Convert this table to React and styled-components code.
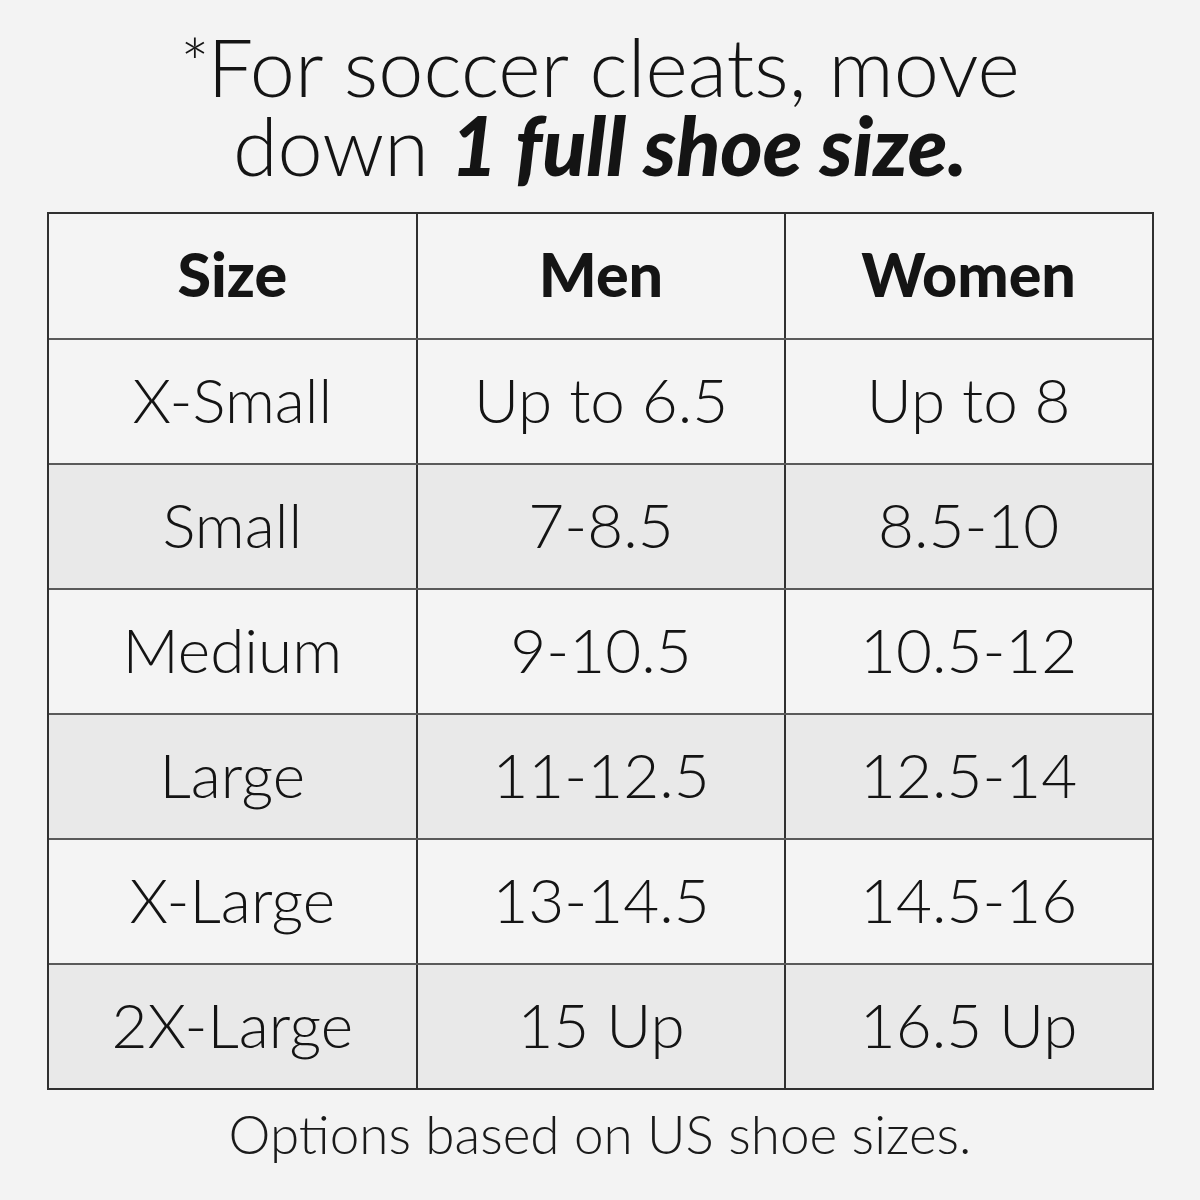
import React from "react";
import styled, { createGlobalStyle } from "styled-components";

const Global = createGlobalStyle`
  html, body { margin: 0; padding: 0; background: #f3f3f3; }
  body { font-family: Lato, "Open Sans", sans-serif; color: #111; }
`;

const Page = styled.div`
  width: 1200px;
  height: 1200px;
  background: #f3f3f3;
  display: flex;
  flex-direction: column;
  align-items: center;
  box-sizing: border-box;
  padding-top: 23px;
`;

const Title = styled.h1`
  margin: 0;
  font-family: Lato, sans-serif;
  font-weight: 300;
  font-size: 81px;
  line-height: 79px;
  text-align: center;
  color: #141414;
`;

const Star = styled.span`
  font-size: 0.85em;
  vertical-align: 0.12em;
  margin-right: -2px;
`;

const Emph = styled.strong`
  font-weight: 900;
  font-style: italic;
`;

const Table = styled.div`
  margin-top: 28px;
  width: 1107px;
  box-sizing: border-box;
  border: 2px solid #303030;
  display: flex;
  flex-direction: column;
`;

const Row = styled.div`
  display: grid;
  grid-template-columns: repeat(3, 1fr);
  height: ${(p) => (p.$header ? 124 : 125)}px;
  box-sizing: border-box;
  background: ${(p) => (p.$shade ? "#e9e9e9" : "#f4f4f4")};
  border-top: ${(p) => (p.$first ? "none" : "2px solid #5a5a5a")};
`;

const Cell = styled.div`
  display: flex;
  align-items: center;
  justify-content: center;
  border-left: ${(p) => (p.$first ? "none" : "2px solid #303030")};
  font-family: Lato, sans-serif;
  font-size: ${(p) => (p.$header ? 61 : 62)}px;
  font-weight: ${(p) => (p.$header ? 900 : 300)};
  color: #141414;
  padding-bottom: 5px;
`;

const Footer = styled.p`
  margin: 14px 0 0;
  font-family: Lato, sans-serif;
  font-weight: 300;
  font-size: 53px;
  line-height: 60px;
  color: #1a1a1a;
  text-align: center;
`;

const rows = [
  ["X-Small", "Up to 6.5", "Up to 8"],
  ["Small", "7-8.5", "8.5-10"],
  ["Medium", "9-10.5", "10.5-12"],
  ["Large", "11-12.5", "12.5-14"],
  ["X-Large", "13-14.5", "14.5-16"],
  ["2X-Large", "15 Up", "16.5 Up"],
];

export default function App() {
  return (
    <Page>
      <Global />
      <Title>
        <Star>*</Star>For soccer cleats, move
        <br />
        down <Emph>1 full shoe size.</Emph>
      </Title>
      <Table>
        <Row $header $first>
          {["Size", "Men", "Women"].map((h, i) => (
            <Cell key={h} $header $first={i === 0}>
              {h}
            </Cell>
          ))}
        </Row>
        {rows.map((r, ri) => (
          <Row key={r[0]} $shade={ri % 2 === 1}>
            {r.map((c, i) => (
              <Cell key={i} $first={i === 0}>
                {c}
              </Cell>
            ))}
          </Row>
        ))}
      </Table>
      <Footer>Options based on US shoe sizes.</Footer>
    </Page>
  );
}
